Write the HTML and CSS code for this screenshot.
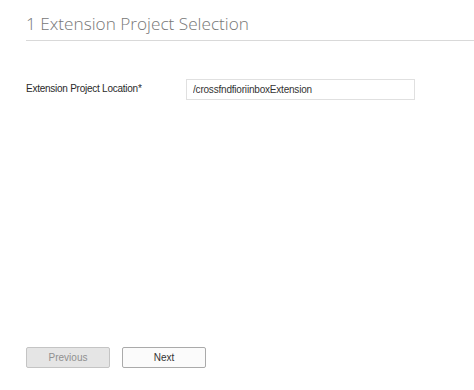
FILE: index.html
```html
<!DOCTYPE html>
<html lang="en">
<head>
    <meta charset="UTF-8">
    <meta name="viewport" content="width=device-width, initial-scale=1.0">
    <title>Extension Project Selection</title>
    <link rel="stylesheet" href="styles.css">
</head>
<body>
    <div class="wizard">
        <div class="wizard-header">
            <h1>1 Extension Project Selection</h1>
        </div>

        <div class="wizard-body">
            <div class="form-row">
                <label class="form-label" for="location">Extension Project Location*</label>
                <input class="form-input" id="location" type="text" value="/crossfndfioriinboxExtension">
            </div>
        </div>

        <div class="wizard-footer">
            <button class="btn btn-disabled" disabled>Previous</button>
            <button class="btn">Next</button>
        </div>
    </div>
</body>
</html>
```

FILE: styles.css
```css
* {
    margin: 0;
    padding: 0;
    box-sizing: border-box;
}

body {
    font-family: 'Liberation Sans', Arial, sans-serif;
    background: white;
    height: 100vh;
}

.wizard {
    display: flex;
    flex-direction: column;
    height: 100%;
    padding-left: 26px;
}

.wizard-header {
    border-bottom: 1px solid #d9d9d9;
    height: 41px;
    padding-top: 12px;
}

.wizard-header h1 {
    font-family: 'Open Sans', sans-serif;
    font-weight: 300;
    font-size: 17.2px;
    color: #777;
    line-height: 24px;
}

.wizard-body {
    padding-top: 38px;
}

.form-row {
    display: flex;
    align-items: flex-start;
}

.form-label {
    width: 160px;
    font-size: 10px;
    letter-spacing: -0.25px;
    color: #2a2a2a;
    padding-top: 3px;
    line-height: 14px;
}

.form-input {
    width: 229px;
    height: 21px;
    border: 1px solid #e0e0e0;
    padding: 0 6px;
    font-family: 'Liberation Sans', Arial, sans-serif;
    font-size: 10px;
    letter-spacing: -0.2px;
    color: #333;
    outline: none;
}

.wizard-footer {
    margin-top: auto;
    margin-bottom: 22px;
    display: flex;
    gap: 12px;
}

.btn {
    width: 84px;
    height: 21px;
    background: #fbfbfb;
    border: 1px solid #aaa;
    border-radius: 2px;
    font-family: 'Liberation Sans', Arial, sans-serif;
    font-size: 10px;
    color: #333;
    cursor: pointer;
}

.btn-disabled {
    background: #e5e5e5;
    border-color: #c4c4c4;
    color: #909090;
    cursor: default;
}
```
